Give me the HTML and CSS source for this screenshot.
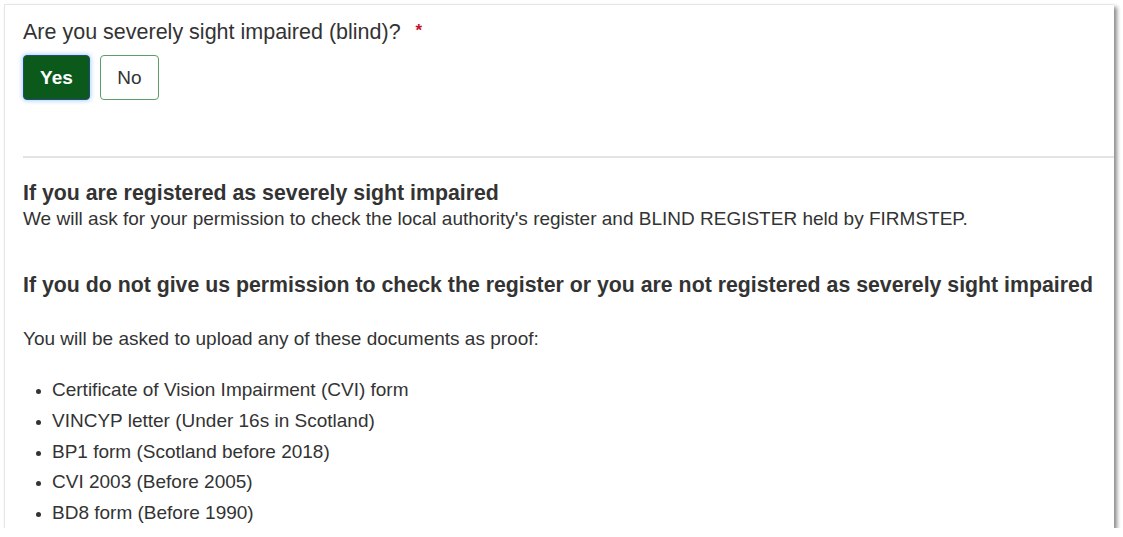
FILE: index.html
```html
<!DOCTYPE html>
<html lang="en">
<head>
<meta charset="utf-8">
<title>Sight impairment</title>
<link rel="stylesheet" href="styles.css">
</head>
<body>
<div class="card">
  <section class="question">
    <div class="label">Are you severely sight impaired (blind)? <span class="req">*</span></div>
    <div class="choices">
      <button class="btn btn-yes" type="button">Yes</button>
      <button class="btn btn-no" type="button">No</button>
    </div>
  </section>
  <hr class="divider">
  <section class="info">
    <h3 class="h-small">If you are registered as severely sight impaired</h3>
    <p class="p-first">We will ask for your permission to check the local authority's register and BLIND REGISTER held by FIRMSTEP.</p>
    <h3 class="h-large">If you do not give us permission to check the register or you are not registered as severely sight impaired</h3>
    <p class="p-second">You will be asked to upload any of these documents as proof:</p>
    <ul class="docs">
      <li>Certificate of Vision Impairment (CVI) form</li>
      <li>VINCYP letter (Under 16s in Scotland)</li>
      <li>BP1 form (Scotland before 2018)</li>
      <li>CVI 2003 (Before 2005)</li>
      <li>BD8 form (Before 1990)</li>
    </ul>
  </section>
</div>
</body>
</html>
```

FILE: styles.css
```css
html, body {
  margin: 0;
  padding: 0;
  background: #ffffff;
}
body {
  font-family: "Liberation Sans", Arial, Helvetica, sans-serif;
  color: #333333;
}
.card {
  margin: 4px 0 0 4px;
  width: 1110px;
  height: 524px;
  box-sizing: border-box;
  background: #ffffff;
  border: 1px solid #e6e6e6;
  border-right: none;
  border-bottom: none;
  box-shadow: 3px 3px 4px rgba(0, 0, 0, 0.45);
  overflow: hidden;
  padding: 0 0 0 18px;
}
.question {
  padding-top: 13px;
}
.label {
  font-size: 21.5px;
  line-height: 26px;
  color: #333333;
  white-space: nowrap;
}
.req {
  color: #c8102e;
  font-weight: bold;
  font-size: 17px;
  vertical-align: 3px;
  margin-left: 9px;
}
.choices {
  display: flex;
  gap: 10px;
  margin-top: 10px;
}
.btn {
  font-family: "Liberation Sans", Arial, Helvetica, sans-serif;
  font-size: 19px;
  height: 45px;
  border-radius: 4px;
  padding: 0;
  cursor: pointer;
}
.btn-yes {
  width: 67px;
  background: #0b5a1b;
  color: #ffffff;
  font-weight: bold;
  border: 1px solid #1c4f7a;
  box-shadow: 0 0 4px 1px rgba(80, 150, 230, 0.45);
}
.btn-no {
  width: 59px;
  background: #ffffff;
  color: #333333;
  border: 1px solid #5a9e68;
}
.divider {
  border: none;
  border-top: 2px solid #e4e4e4;
  margin: 56px 0 0 0;
}
.info {
  padding-right: 10px;
}
.h-small {
  font-size: 21.3px;
  font-weight: bold;
  margin: 23px 0 0 0;
  line-height: 24px;
}
.p-first {
  font-size: 19px;
  line-height: 24px;
  margin: 2px 0 0 0;
}
.h-large {
  font-size: 21.3px;
  font-weight: bold;
  margin: 41px 0 0 0;
  line-height: 26px;
  white-space: nowrap;
}
.p-second {
  font-size: 19px;
  line-height: 24px;
  margin: 29px 0 0 0;
}
.docs {
  margin: 27px 0 0 0;
  padding-left: 29px;
  font-size: 19px;
  line-height: 24px;
}
.docs li {
  margin-bottom: 6.75px;
}
.docs li::marker {
  font-size: 15px;
}
```
